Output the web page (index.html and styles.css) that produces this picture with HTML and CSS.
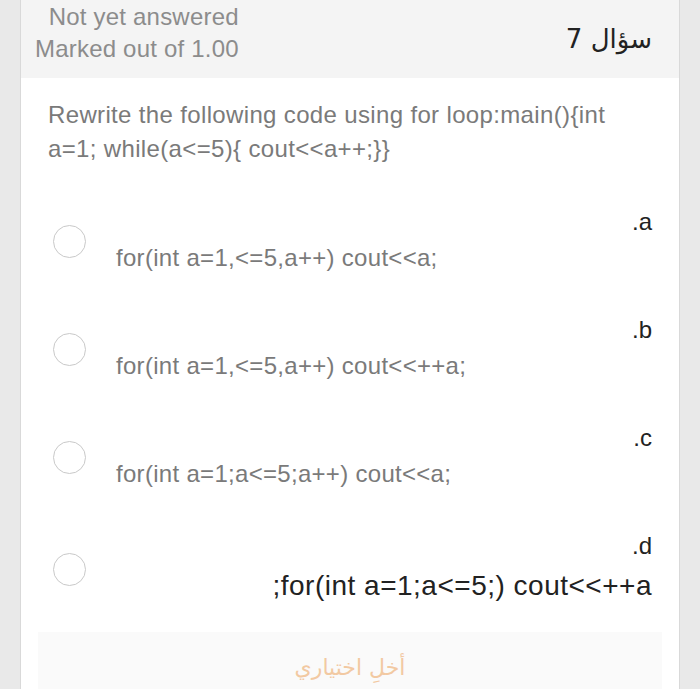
FILE: index.html
```html
<!DOCTYPE html>
<html lang="ar">
<head>
    <meta charset="UTF-8">
    <meta name="viewport" content="width=device-width, initial-scale=1.0">
    <title>سؤال 7</title>
    <link rel="stylesheet" href="styles.css">
</head>
<body>
    <div class="card">
        <div class="info">
            <div class="state">
                <div>Not yet answered</div>
                <div>Marked out of 1.00</div>
            </div>
            <h3 class="qno" dir="rtl">سؤال 7</h3>
        </div>

        <div class="content">
            <p class="qtext">Rewrite the following code using for loop:main(){int a=1; while(a&lt;=5){ cout&lt;&lt;a++;}}</p>

            <div class="answers">
                <label class="option">
                    <span class="radio"></span>
                    <span class="body">
                        <span class="letter" dir="rtl">a.</span>
                        <span class="text">for(int a=1,&lt;=5,a++) cout&lt;&lt;a;</span>
                    </span>
                </label>

                <label class="option">
                    <span class="radio"></span>
                    <span class="body">
                        <span class="letter" dir="rtl">b.</span>
                        <span class="text">for(int a=1,&lt;=5,a++) cout&lt;&lt;++a;</span>
                    </span>
                </label>

                <label class="option">
                    <span class="radio"></span>
                    <span class="body">
                        <span class="letter" dir="rtl">c.</span>
                        <span class="text">for(int a=1;a&lt;=5;a++) cout&lt;&lt;a;</span>
                    </span>
                </label>

                <label class="option option-rtl">
                    <span class="radio"></span>
                    <span class="body">
                        <span class="letter" dir="rtl">d.</span>
                        <span class="text" dir="rtl">for(int a=1;a&lt;=5;) cout&lt;&lt;++a;</span>
                    </span>
                </label>
            </div>

            <div class="clear-choice" dir="rtl">أخلِ اختياري</div>
        </div>
    </div>
</body>
</html>
```

FILE: styles.css
```css
body {
    margin: 0;
    background-color: #e9e9e9;
    font-family: 'Liberation Sans', Arial, sans-serif;
    color: #777;
}

.card {
    margin: 0 20px;
    min-height: 689px;
    background: #fff;
    border-left: 1px solid #d9d9d9;
    border-right: 1px solid #d9d9d9;
}

.info {
    display: flex;
    justify-content: space-between;
    align-items: center;
    height: 78px;
    padding: 0 27px 0 14px;
    background: #f4f4f4;
}

.state {
    text-align: right;
    font-size: 24px;
    line-height: 32px;
    letter-spacing: 0.2px;
    color: #8c8c8c;
    align-self: flex-start;
    padding-top: 1px;
}

.qno {
    margin: 0;
    font-family: 'DejaVu Sans', sans-serif;
    font-weight: normal;
    font-size: 26px;
    color: #222;
}

.content {
    padding: 20px 27px 0 27px;
}

.qtext {
    margin: 0;
    font-size: 24px;
    line-height: 34px;
    letter-spacing: 0.35px;
    color: #7a7a7a;
}

.answers {
    padding-top: 3px;
}

.option {
    display: flex;
    align-items: center;
    margin-top: 36px;
}

.radio {
    flex: none;
    width: 31px;
    height: 31px;
    margin-left: 5px;
    border: 1.5px solid #c9c9c9;
    border-radius: 50%;
}

.body {
    flex: 1;
    display: flex;
    flex-direction: column;
    padding-left: 30px;
}

.letter {
    text-align: right;
    font-size: 24px;
    line-height: 34px;
    color: #222;
}

.text {
    font-size: 24px;
    line-height: 38px;
    letter-spacing: 0.3px;
    color: #7a7a7a;
}

.option-rtl .text {
    text-align: right;
    font-size: 28px;
    line-height: 46px;
    letter-spacing: 0.5px;
    color: #222;
}

.clear-choice {
    margin: 23px -10px 0 -10px;
    height: 80px;
    background: #fafafa;
    text-align: center;
    font-family: 'DejaVu Sans', sans-serif;
    font-size: 22px;
    line-height: 72px;
    color: #f2c9a2;
}
```
